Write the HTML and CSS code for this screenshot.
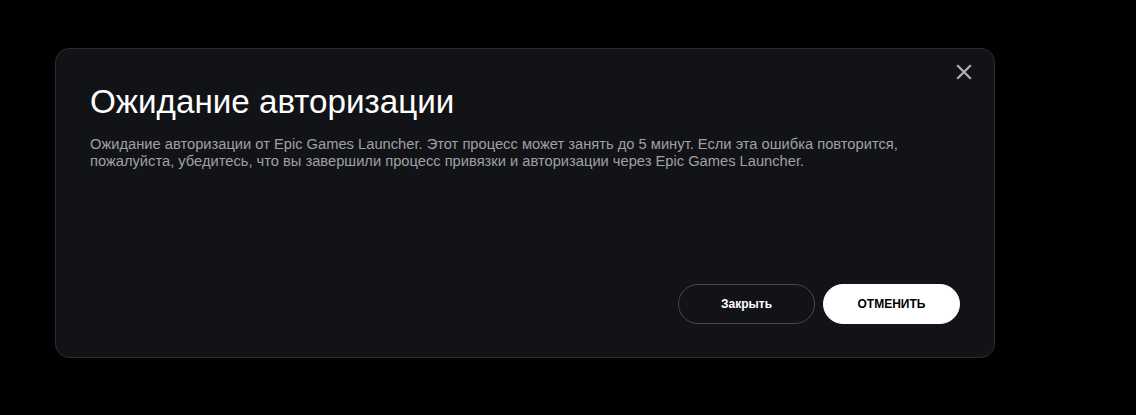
FILE: index.html
```html
<!DOCTYPE html>
<html lang="ru">
<head>
<meta charset="utf-8">
<link rel="stylesheet" href="styles.css">
</head>
<body>
<div class="stage">
  <div class="modal">
    <button class="close" aria-label="Закрыть">
      <svg width="16" height="16" viewBox="0 0 16 16"><path d="M2 2L14 14M14 2L2 14" stroke="#b0b0b3" stroke-width="2.2" stroke-linecap="square"/></svg>
    </button>
    <h1 class="title">Ожидание авторизации</h1>
    <p class="text">Ожидание авторизации от Epic Games Launcher. Этот процесс может занять до 5 минут. Если эта ошибка повторится, пожалуйста, убедитесь, что вы завершили процесс привязки и авторизации через Epic Games Launcher.</p>
    <div class="actions">
      <button class="btn btn-ghost">Закрыть</button>
      <button class="btn btn-solid">ОТМЕНИТЬ</button>
    </div>
  </div>
</div>
</body>
</html>
```
FILE: styles.css
```css
html, body {
  margin: 0;
  padding: 0;
  background: #000;
  width: 1136px;
  height: 415px;
  overflow: hidden;
  font-family: "Liberation Sans", Arial, sans-serif;
}
.stage {
  padding: 48px 0 0 55px;
}
.modal {
  position: relative;
  box-sizing: border-box;
  width: 940px;
  height: 310px;
  background: #121316;
  border: 1px solid #2c2c30;
  border-radius: 14px;
  padding: 34px 34px 33px 34px;
  display: flex;
  flex-direction: column;
}
.close {
  position: absolute;
  top: 15px;
  right: 22px;
  width: 16px;
  height: 16px;
  padding: 0;
  border: 0;
  background: none;
  display: flex;
}
.title {
  margin: 0;
  font-size: 33.2px;
  font-weight: 400;
  line-height: 38px;
  color: #fff;
}
.text {
  margin: 15px 0 0;
  font-size: 14.7px;
  line-height: 17px;
  color: #a0a0a3;
  max-width: 830px;
}
.actions {
  margin-top: auto;
  display: flex;
  justify-content: flex-end;
  gap: 8px;
}
.btn {
  width: 137px;
  height: 40px;
  border-radius: 20px;
  font-family: "Liberation Sans", Arial, sans-serif;
  font-size: 12px;
  font-weight: 700;
  cursor: pointer;
}
.btn-ghost {
  background: transparent;
  border: 1px solid #48484c;
  color: #fff;
}
.btn-solid {
  background: #fff;
  border: 1px solid #fff;
  color: #000;
}
```
